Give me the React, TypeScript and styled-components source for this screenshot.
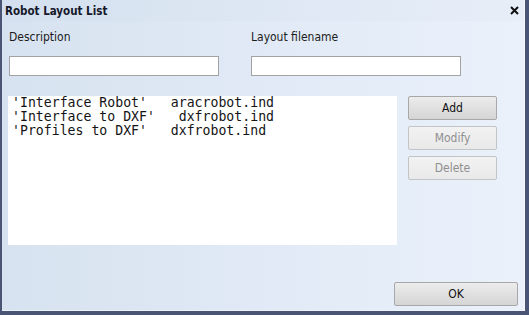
import styled, { createGlobalStyle } from "styled-components";

const GlobalStyle = createGlobalStyle`
  html, body {
    margin: 0;
    padding: 0;
    background: #4c5676;
  }
`;

const Frame = styled.div`
  width: 529px;
  height: 315px;
  box-sizing: border-box;
  padding: 0 4px 4px 2px;
  background: #4a5474;
  display: flex;
`;

const Window = styled.div`
  flex: 1;
  min-width: 0;
  display: flex;
  flex-direction: column;
  font-family: "DejaVu Sans Condensed", "DejaVu Sans", Tahoma, sans-serif;
  font-stretch: condensed;
  color: #1b1b1b;
  overflow: hidden;
  border-right: 1px solid #f4f8fd;
  border-bottom: 1px solid #eef3fa;
`;

const TitleBar = styled.div`
  height: 21px;
  flex: none;
  display: flex;
  align-items: center;
  justify-content: space-between;
  padding: 0 5px 0 3px;
  background: linear-gradient(to right, #d4e0ef, #e7eef8);
`;

const Title = styled.span`
  font-size: 11.5px;
  font-weight: bold;
  color: #15182a;
`;

const CloseIcon = styled.svg`
  width: 9px;
  height: 9px;
`;

const Body = styled.div`
  flex: 1;
  display: flex;
  flex-direction: column;
  padding: 0 6px 4px 7px;
  background: linear-gradient(to right, #d7e2f0, #eaf1fb);
`;

const Fields = styled.div`
  display: grid;
  grid-template-columns: 210px 210px;
  column-gap: 32px;
  margin-top: 8px;
`;

const Field = styled.div`
  display: flex;
  flex-direction: column;
`;

const Label = styled.label`
  font-size: 12px;
  height: 16px;
  line-height: 16px;
  margin-bottom: 11px;
  color: #1b1b1b;
`;

const TextInput = styled.input`
  box-sizing: border-box;
  width: 210px;
  height: 20px;
  border: 1px solid #a3a3a3;
  background: #ffffff;
  padding: 0 3px;
  outline: none;
`;

const Middle = styled.div`
  display: flex;
  gap: 11px;
  margin-top: 20px;
  margin-left: -1px;
`;

const ListBox = styled.div`
  width: 389px;
  height: 149px;
  background: #ffffff;
  box-sizing: border-box;
  padding: 0 4px;
  font-family: "DejaVu Sans Mono", "Liberation Mono", monospace;
  font-stretch: normal;
  font-size: 13.2px;
  line-height: 14px;
  color: #141414;
`;

const ListRow = styled.div`
  white-space: pre;
`;

const ButtonColumn = styled.div`
  display: flex;
  flex-direction: column;
  gap: 6px;
`;

const Button = styled.button<{ $w?: number }>`
  box-sizing: border-box;
  width: ${(p) => p.$w ?? 89}px;
  height: 24px;
  border-radius: 2px;
  border: 1px solid ${(p) => (p.disabled ? "#c2c4c6" : "#a8a8a8")};
  background: ${(p) =>
    p.disabled
      ? "linear-gradient(#f2f2f2, #e9e9e9)"
      : "linear-gradient(#ececec, #d5d5d5)"};
  color: ${(p) => (p.disabled ? "#8f8f8f" : "#111111")};
  font-family: "DejaVu Sans Condensed", "DejaVu Sans", Tahoma, sans-serif;
  font-stretch: condensed;
  font-size: 12px;
  padding: 0;
  cursor: default;
`;

const Footer = styled.div`
  margin-top: auto;
  display: flex;
  justify-content: flex-end;
`;

const items = [
  "'Interface Robot'   aracrobot.ind",
  "'Interface to DXF'   dxfrobot.ind",
  "'Profiles to DXF'   dxfrobot.ind",
];

export default function App() {
  return (
    <>
      <GlobalStyle />
      <Frame>
        <Window>
          <TitleBar>
            <Title>Robot Layout List</Title>
            <CloseIcon viewBox="0 0 9 9">
              <path d="M1 1 L8 8 M8 1 L1 8" stroke="#111" strokeWidth="2" />
            </CloseIcon>
          </TitleBar>
          <Body>
            <Fields>
              <Field>
                <Label>Description</Label>
                <TextInput />
              </Field>
              <Field>
                <Label>Layout filename</Label>
                <TextInput />
              </Field>
            </Fields>
            <Middle>
              <ListBox>
                {items.map((t) => (
                  <ListRow key={t}>{t}</ListRow>
                ))}
              </ListBox>
              <ButtonColumn>
                <Button>Add</Button>
                <Button disabled>Modify</Button>
                <Button disabled>Delete</Button>
              </ButtonColumn>
            </Middle>
            <Footer>
              <Button $w={124}>OK</Button>
            </Footer>
          </Body>
        </Window>
      </Frame>
    </>
  );
}
